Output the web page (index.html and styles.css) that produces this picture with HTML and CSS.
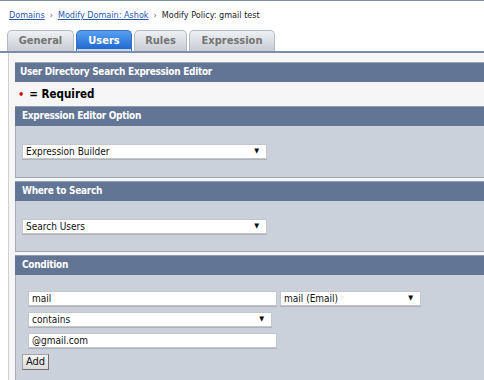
FILE: index.html
```html
<!DOCTYPE html>
<html>
<head>
<meta charset="utf-8">
<link rel="stylesheet" href="styles.css">
</head>
<body>
<div class="topline"></div>
<div class="crumbs"><a href="#">Domains</a><span class="sep">›</span><a href="#">Modify Domain: Ashok</a><span class="sep">›</span><span>Modify Policy: gmail test</span></div>
<div class="tabs">
  <div class="tab t-general">General</div>
  <div class="tab active t-users">Users</div>
  <div class="tab t-rules">Rules</div>
  <div class="tab t-expr">Expression</div>
</div>
<div class="panel">
  <div class="titlebar">User Directory Search Expression Editor</div>
  <div class="req"><span class="dot">•</span><span>= Required</span></div>
  <div class="section">
    <div class="shead">Expression Editor Option</div>
    <div class="sbody">
      <div class="field select w-main"><span>Expression Builder</span><span class="arrow">▼</span></div>
    </div>
  </div>
  <div class="section">
    <div class="shead">Where to Search</div>
    <div class="sbody s-where">
      <div class="field select w-main"><span>Search Users</span><span class="arrow">▼</span></div>
    </div>
  </div>
  <div class="section last">
    <div class="shead">Condition</div>
    <div class="sbody s-cond">
      <div class="row">
        <div class="field w-input"><span>mail</span></div>
        <div class="field select w-attr"><span>mail (Email)</span><span class="arrow">▼</span></div>
      </div>
      <div class="row">
        <div class="field select w-op"><span>contains</span><span class="arrow">▼</span></div>
      </div>
      <div class="row">
        <div class="field w-input"><span>@gmail.com</span></div>
      </div>
      <div class="btn">Add</div>
    </div>
  </div>
</div>
</body>
</html>
```
FILE: styles.css
```css
html, body {
  overflow: hidden;
}
body {
  margin: 0;
  font-family: "DejaVu Sans Condensed", "DejaVu Sans", sans-serif;
  background: #fff;
  color: #000;
  height: 380px;
}
.topline {
  height: 1px;
  background: #7f8dab;
}
.crumbs {
  padding: 7px 0 0 9px;
  height: 14px;
  font-size: 9px;
  line-height: 14px;
  color: #222;
  white-space: nowrap;
}
.crumbs a {
  color: #2a56b0;
  text-decoration: underline;
}
.crumbs .sep {
  color: #666;
  margin: 0 5px;
}
.tabs {
  display: flex;
  gap: 2px;
  margin-top: 8px;
  padding-left: 7px;
  height: 21px;
  border-bottom: 2px solid #7c8cab;
}
.tab {
  height: 21px;
  box-sizing: border-box;
  border: 1px solid #b5b9c1;
  border-bottom: none;
  border-radius: 5px 5px 0 0;
  background: linear-gradient(#eff1f4, #c8ccd3);
  color: #747474;
  font-weight: bold;
  font-size: 11px;
  line-height: 20px;
  text-align: center;
}
.t-general { width: 67px; }
.t-users { width: 56px; }
.t-rules { width: 53px; }
.t-expr { width: 86px; }
.tab.active {
  background: linear-gradient(#56a0f2, #1c62cc);
  border-color: #3b70ba;
  color: #fff;
  box-shadow: inset 0 -2px 0 #c6d6ee;
}
.panel {
  margin-left: 8px;
  border-left: 1px solid #cfcfcf;
  background: #f6f6f6;
  padding: 9px 0 0 6px;
}
.titlebar {
  height: 20px;
  box-sizing: border-box;
  background: #627594;
  border-top: 1px solid #9aa6ba;
  color: #fff;
  font-weight: bold;
  font-size: 10px;
  letter-spacing: -0.3px;
  line-height: 18px;
  padding-left: 5px;
}
.req {
  height: 24px;
  display: flex;
  align-items: center;
  gap: 5px;
  padding-left: 3px;
  font-weight: bold;
  font-size: 11.5px;
}
.req .dot {
  color: #d01010;
  font-size: 11px;
}
.section {
  margin-bottom: 3px;
}
.section.last {
  margin-bottom: 0;
}
.shead {
  height: 19px;
  background: #627594;
  border-top: 1px solid #8e9bb2;
  color: #fff;
  font-weight: bold;
  font-size: 10px;
  letter-spacing: -0.3px;
  line-height: 18px;
  padding-left: 7px;
}
.sbody {
  height: 52px;
  box-sizing: border-box;
  background: #cbd1db;
  border-left: 1px solid #a7acb5;
  border-bottom: 1px solid #a0a6ae;
  padding: 18px 0 0 6px;
}
.s-where {
  height: 51px;
}
.s-cond {
  height: 106px;
  border-bottom: none;
  padding: 16px 0 0 12px;
}
.field {
  height: 15px;
  box-sizing: border-box;
  background: #fff;
  border: 1px solid #c3c7cd;
  box-shadow: 0 1px 0 #aeb2b8;
  font-size: 10px;
  line-height: 13px;
  padding-left: 3px;
  display: flex;
  justify-content: space-between;
  align-items: center;
  color: #111;
}
.select .arrow {
  font-size: 7px;
  margin-right: 7px;
  color: #111;
}
.w-main { width: 245px; }
.w-input { width: 249px; }
.w-attr { width: 141px; }
.w-op { width: 244px; }
.row {
  display: flex;
  gap: 3px;
  margin-bottom: 6px;
}
.btn {
  margin-left: -6px;
  height: 16px;
  box-sizing: border-box;
  width: 27px;
  border: 1px solid #a3a3a3;
  border-right-color: #707070;
  border-bottom-color: #707070;
  background: linear-gradient(#f4f4f4, #dcdcdc);
  font-size: 11px;
  line-height: 14px;
  text-align: center;
  color: #111;
}
```
